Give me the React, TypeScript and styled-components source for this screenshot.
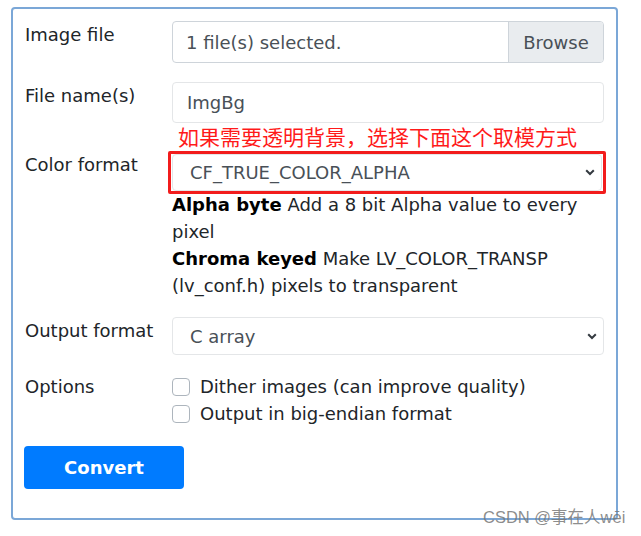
import React from "react";
import styled, { createGlobalStyle } from "styled-components";

const Global = createGlobalStyle`
  html, body { margin: 0; padding: 0; background: #ffffff; }
  body { font-family: "DejaVu Sans", "Noto Sans", sans-serif; color: #212529; }
`;

const Page = styled.div`
  position: relative;
  width: 641px;
  height: 536px;
  padding: 7px 0 0 11px;
  box-sizing: border-box;
`;

const Panel = styled.div`
  width: 607px;
  box-sizing: border-box;
  border: 2px solid #7ba7d7;
  border-radius: 4px;
  padding: 12px 12px 29px 12px;
  display: flex;
  flex-direction: column;
`;

const Row = styled.div<{ $gap?: number }>`
  display: grid;
  grid-template-columns: 147px 432px;
  margin-bottom: ${(p) => (p.$gap ?? 19)}px;
`;

const Label = styled.div`
  font-size: 18px;
  line-height: 27px;
`;

const Control = styled.div`
  display: flex;
  flex-direction: column;
`;

const FileBox = styled.div`
  display: flex;
  height: 42px;
  box-sizing: border-box;
  border: 1px solid #ced4da;
  border-radius: 4px;
  overflow: hidden;
`;

const FileText = styled.div`
  flex: 1;
  display: flex;
  align-items: center;
  padding-left: 13px;
  font-size: 18px;
  color: #495057;
`;

const BrowseBtn = styled.div`
  width: 94px;
  display: flex;
  align-items: center;
  justify-content: center;
  background: #e9ecef;
  border-left: 1px solid #ced4da;
  font-size: 18px;
  color: #495057;
`;

const TextInput = styled.div`
  height: 41px;
  box-sizing: border-box;
  border: 1px solid #e4e6e8;
  border-radius: 4px;
  display: flex;
  align-items: center;
  padding-left: 14px;
  font-size: 18px;
  color: #495057;
`;

const Annotation = styled.div`
  height: 27px;
  line-height: 27px;
  margin-left: 6px;
  font-family: "Noto Sans CJK SC", sans-serif;
  font-size: 21px;
  color: #ff1a1a;
  white-space: nowrap;
`;

const Highlight = styled.div`
  border: 3px solid #f21c1c;
  border-radius: 2px;
  margin: 0 -2px 0 -4px;
  padding: 0 1px 0 1px;
`;

const Select = styled.div<{ $h: number }>`
  height: ${(p) => p.$h}px;
  box-sizing: border-box;
  border: 1px solid #e4e6e8;
  border-radius: 4px;
  display: flex;
  align-items: center;
  justify-content: space-between;
  padding: 0 6px 0 17px;
  font-size: 18px;
  color: #495057;
`;

const Chevron = () => (
  <svg width="10" height="7" viewBox="0 0 10 7">
    <polyline points="1.2,1.2 5,5 8.8,1.2" fill="none" stroke="#343a40" strokeWidth="2" />
  </svg>
);

const Desc = styled.div`
  margin-top: -3px;
  font-size: 18px;
  line-height: 27px;
  color: #212529;
`;

const Bold = styled.b`
  font-weight: 700;
  color: #000;
`;

const CheckRow = styled.label`
  display: flex;
  align-items: center;
  height: 27px;
  font-size: 18px;
  gap: 10px;
`;

const Box = styled.span`
  width: 18px;
  height: 18px;
  box-sizing: border-box;
  border: 1px solid #adb5bd;
  border-radius: 4px;
  background: #fff;
  flex: none;
`;

const ConvertBtn = styled.button`
  width: 160px;
  height: 43px;
  margin-left: -1px;
  border: none;
  border-radius: 4px;
  background: #007bff;
  color: #fff;
  font-family: "DejaVu Sans", sans-serif;
  font-size: 18px;
  font-weight: 600;
  padding: 0;
`;

const Watermark = styled.div`
  position: absolute;
  left: 483px;
  top: 507px;
  font-family: "Liberation Sans", "Noto Sans CJK SC", sans-serif;
  font-size: 16.5px;
  line-height: 20px;
  color: rgba(120, 120, 120, 0.85);
  white-space: nowrap;
`;

export default function App() {
  return (
    <Page>
      <Global />
      <Panel>
        <Row>
          <Label>Image file</Label>
          <Control>
            <FileBox>
              <FileText>1 file(s) selected.</FileText>
              <BrowseBtn>Browse</BrowseBtn>
            </FileBox>
          </Control>
        </Row>
        <Row $gap={1}>
          <Label>File name(s)</Label>
          <Control>
            <TextInput>ImgBg</TextInput>
            <Annotation>如果需要透明背景，选择下面这个取模方式</Annotation>
          </Control>
        </Row>
        <Row $gap={18}>
          <Label>Color format</Label>
          <Control>
            <Highlight>
              <Select $h={37}>
                <span>CF_TRUE_COLOR_ALPHA</span>
                <Chevron />
              </Select>
            </Highlight>
            <Desc>
              <Bold>Alpha byte</Bold> Add a 8 bit Alpha value to every pixel
              <br />
              <Bold>Chroma keyed</Bold> Make LV_COLOR_TRANSP (lv_conf.h) pixels to transparent
            </Desc>
          </Control>
        </Row>
        <Row $gap={18}>
          <Label>Output format</Label>
          <Control>
            <Select $h={38}>
              <span>C array</span>
              <Chevron />
            </Select>
          </Control>
        </Row>
        <Row $gap={19}>
          <Label>Options</Label>
          <Control>
            <CheckRow>
              <Box />
              Dither images (can improve quality)
            </CheckRow>
            <CheckRow>
              <Box />
              Output in big-endian format
            </CheckRow>
          </Control>
        </Row>
        <div>
          <ConvertBtn>Convert</ConvertBtn>
        </div>
      </Panel>
      <Watermark>CSDN @事在人wēi</Watermark>
    </Page>
  );
}
